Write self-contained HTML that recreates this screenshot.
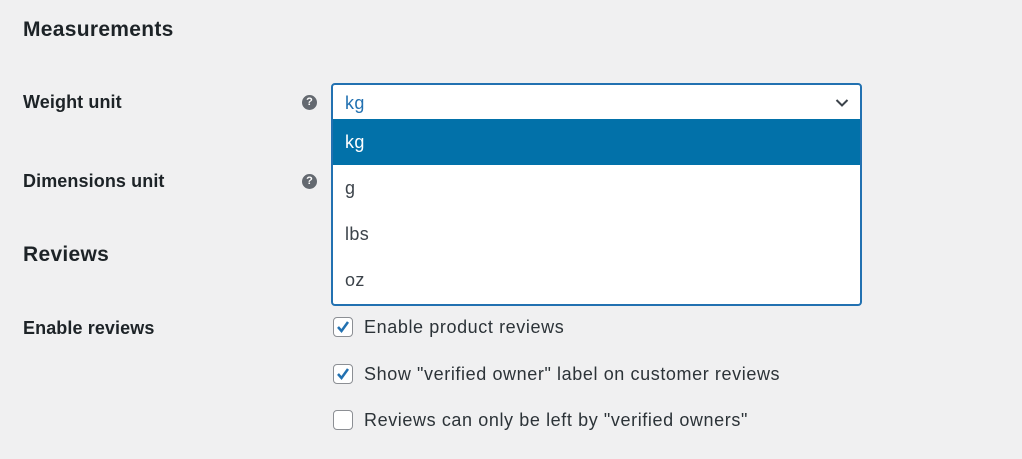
<!DOCTYPE html>
<html><head><style>
body{margin:0;width:1022px;height:459px;background:#f0f0f1;font-family:"Liberation Sans",sans-serif;color:#1d2327;position:relative;overflow:hidden}
.a{position:absolute;white-space:nowrap}
h2{position:absolute;margin:0;font-size:21px;letter-spacing:0.3px;font-weight:bold;color:#1d2327}
.lbl{font-size:18px;letter-spacing:0.1px;font-weight:bold;color:#1d2327}
.q{position:absolute;width:15px;height:15px;border-radius:50%;background:#646970;color:#fff;font-size:11px;font-weight:bold;text-align:center;line-height:15px}
.dd{position:absolute;left:331px;top:83px;width:527px;height:219px;border:2px solid #2271b1;border-radius:4px;background:#fff;overflow:hidden;font-size:18px;letter-spacing:0.4px}
.opt{position:absolute;left:12px;color:#3c434a}
.cb{position:absolute;left:333px;width:18px;height:18px;border:1px solid #8c8f94;border-radius:4px;background:#fff}
.t{font-size:18px;letter-spacing:0.6px;color:#2c3338;left:364px}
</style></head><body>
<h2 style="left:23px;top:18px">Measurements</h2>
<div class="a lbl" style="left:23px;top:92px">Weight unit</div>
<div class="q" style="left:302px;top:95px">?</div>
<div class="a lbl" style="left:23px;top:171px">Dimensions unit</div>
<div class="q" style="left:302px;top:174px">?</div>
<h2 style="left:23px;top:243px">Reviews</h2>
<div class="a lbl" style="left:23px;top:318px">Enable reviews</div>
<div class="dd">
 <div class="opt" style="top:8px;color:#2271b1">kg</div>
 <svg style="position:absolute;left:502px;top:13px" width="14" height="10" viewBox="0 0 14 10"><path d="M1.5 2 L7 7.5 L12.5 2" fill="none" stroke="#3c434a" stroke-width="2"/></svg>
 <div style="position:absolute;left:0;top:34px;width:100%;height:46px;background:#0271a9"></div>
 <div class="opt" style="top:47px;color:#fff">kg</div>
 <div class="opt" style="top:93px">g</div>
 <div class="opt" style="top:139px">lbs</div>
 <div class="opt" style="top:185px">oz</div>
</div>
<div class="cb" style="top:317px"><svg width="18" height="18" viewBox="0 0 18 18"><path d="M4 9 L7.5 13 L14 4" fill="none" stroke="#2271b1" stroke-width="2.5"/></svg></div>
<div class="a t" style="top:317px">Enable product reviews</div>
<div class="cb" style="top:364px"><svg width="18" height="18" viewBox="0 0 18 18"><path d="M4 9 L7.5 13 L14 4" fill="none" stroke="#2271b1" stroke-width="2.5"/></svg></div>
<div class="a t" style="top:364px">Show "verified owner" label on customer reviews</div>
<div class="cb" style="top:410px"></div>
<div class="a t" style="top:410px">Reviews can only be left by "verified owners"</div>
</body></html>
